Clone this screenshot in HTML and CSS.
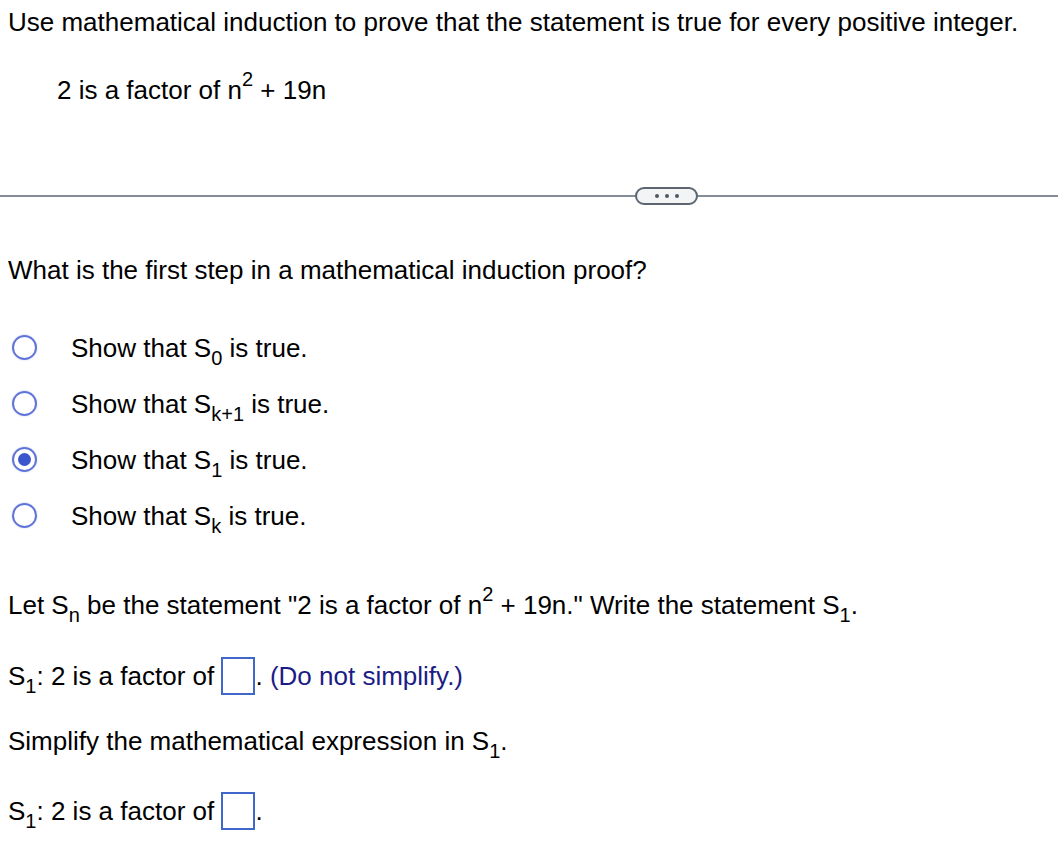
FILE: index.html
```html
<!DOCTYPE html>
<html lang="en">
<head>
    <meta charset="UTF-8" />
    <title>Mathematical Induction</title>
    <link rel="stylesheet" href="styles.css">
</head>
<body>
    <div class="question-head">
        <p class="intro">Use mathematical induction to prove that the statement is true for every positive integer.</p>
        <p class="statement">2 is a factor of n<sup>2</sup> + 19n</p>
    </div>

    <div class="divider">
        <span class="more-btn"><i></i><i></i><i></i></span>
    </div>

    <div class="question-body">
        <p class="prompt">What is the first step in a mathematical induction proof?</p>

        <ul class="choices">
            <li><span class="radio"></span><span>Show that S<sub>0</sub> is true.</span></li>
            <li><span class="radio"></span><span>Show that S<sub>k+1</sub> is true.</span></li>
            <li><span class="radio checked"></span><span>Show that S<sub>1</sub> is true.</span></li>
            <li><span class="radio"></span><span>Show that S<sub>k</sub> is true.</span></li>
        </ul>

        <p class="let-line">Let S<sub>n</sub> be the statement "2 is a factor of n<sup>2</sup> + 19n." Write the statement S<sub>1</sub>.</p>

        <p class="answer-line first-answer">S<sub>1</sub>: 2 is a factor of <span class="answer-box"></span>. <span class="hint">(Do not simplify.)</span></p>

        <p class="simplify-line">Simplify the mathematical expression in S<sub>1</sub>.</p>

        <p class="answer-line">S<sub>1</sub>: 2 is a factor of <span class="answer-box"></span>.</p>
    </div>
</body>
</html>
```

FILE: styles.css
```css
body {
    margin: 0;
    font-family: "Liberation Sans", Arial, sans-serif;
    font-size: 26px;
    line-height: 30px;
    color: #000;
    background: #fff;
}

p {
    margin: 0;
}

sub, sup {
    font-size: 20px;
    line-height: 0;
    position: relative;
    vertical-align: baseline;
}

sub {
    top: 8px;
}

sup {
    top: -13px;
}

.question-head {
    padding: 7px 8px 0 8px;
}

.statement {
    margin-top: 38px;
    padding-left: 49px;
}

.divider {
    margin-top: 82px;
    height: 18px;
    display: flex;
    align-items: center;
    position: relative;
    padding-left: 635px;
}

.divider::before {
    content: "";
    position: absolute;
    left: 0;
    right: 0;
    top: 8px;
    height: 2px;
    background: #848c97;
}

.more-btn {
    position: relative;
    width: 59px;
    height: 14px;
    border: 2px solid #5b6670;
    border-radius: 9px;
    background: #f3f4f6;
    display: flex;
    align-items: center;
    justify-content: center;
    gap: 6px;
}

.more-btn i {
    width: 4px;
    height: 4px;
    border-radius: 50%;
    background: #4e5861;
}

.question-body {
    padding: 0 8px;
}

.prompt {
    margin-top: 50px;
}

.choices {
    list-style: none;
    margin: 35px 0 0 0;
    padding: 0;
}

.choices li {
    display: flex;
    align-items: center;
    height: 56px;
    padding-left: 63px;
    position: relative;
}

.radio {
    position: absolute;
    left: 4px;
    top: 15px;
    width: 21px;
    height: 21px;
    border: 2.5px solid #5f74d8;
    border-radius: 50%;
    box-shadow: 0 0 2px rgba(95, 116, 216, 0.35);
}

.radio.checked::after {
    content: "";
    position: absolute;
    left: 4px;
    top: 4px;
    width: 13px;
    height: 13px;
    border-radius: 50%;
    background: #3b55cc;
}

.let-line {
    margin-top: 46px;
}

.answer-line {
    margin-top: 36px;
    height: 38px;
    line-height: 38px;
}

.first-answer {
    margin-top: 37px;
}

.answer-box {
    display: inline-block;
    vertical-align: top;
    box-sizing: border-box;
    width: 34px;
    height: 38px;
    border: 2px solid #3f67cc;
}

.hint {
    color: #1c1c86;
}

.simplify-line {
    margin-top: 31px;
}
```
